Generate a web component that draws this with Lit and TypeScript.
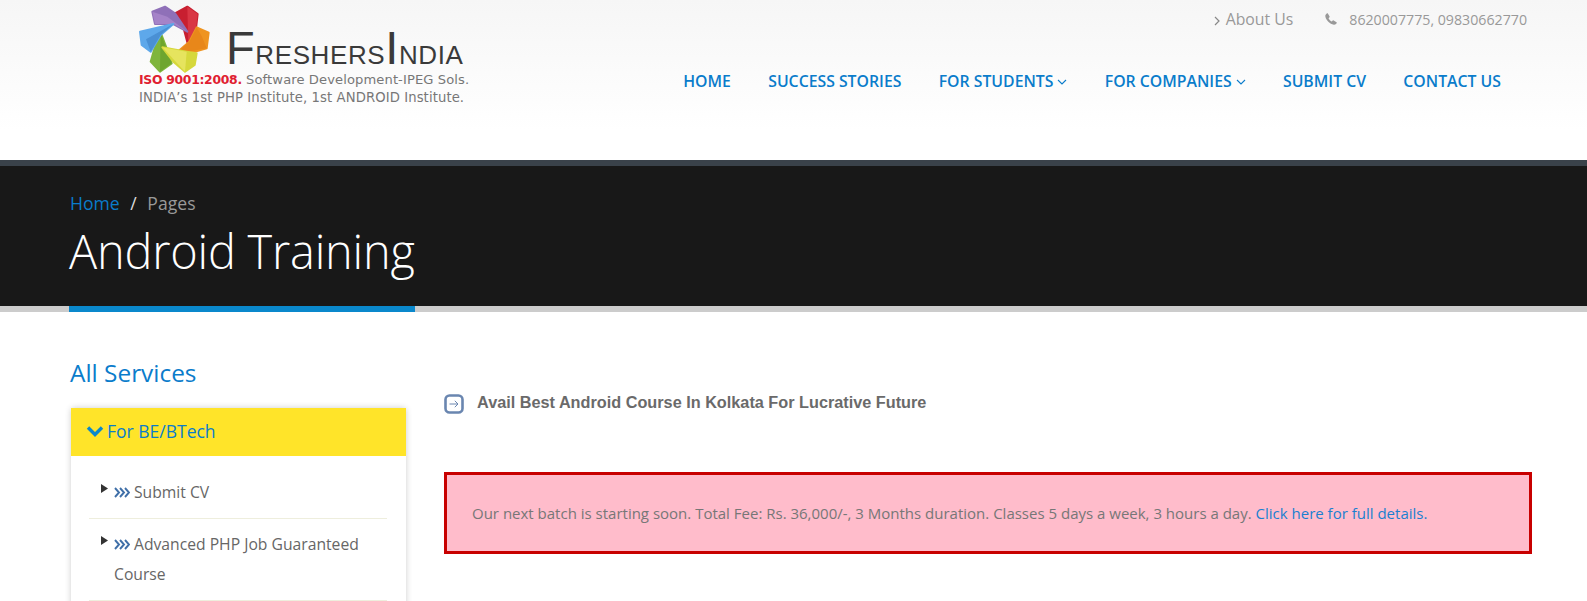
import { LitElement, html, css, svg } from "lit";
import { customElement } from "lit/decorators.js";

const chevron = html`<svg class="caret" viewBox="0 0 10 6"><path d="M1 1l4 4 4-4" fill="none" stroke="currentColor" stroke-width="1.100"/></svg>`;
const triple = html`<svg class="triple" viewBox="0 0 16 11"><path d="M1 1l4 4.500-4 4.500M6 1l4 4.500-4 4.500M11 1l4 4.500-4 4.500" fill="none" stroke="#3f6fa8" stroke-width="1.900"/></svg>`;
const marker = html`<svg class="marker" viewBox="0 0 7 9"><path d="M0 0l7 4.500L0 9z" fill="#333"/></svg>`;

const petals = svg`
  <polygon points="135,40 172,20 203,42 198,85 175,138 160,82" fill="#c81f30" stroke="#c81f30" stroke-width="6" stroke-linejoin="round"/>
  <polygon points="172,20 203,42 198,85 175,138" fill="#d93644"/>
  <polygon points="200,82 236,98 230,145 178,160 135,162 178,125" fill="#ef9420" stroke="#ef9420" stroke-width="6" stroke-linejoin="round"/>
  <polygon points="200,82 178,125 135,162 230,145 216,110" fill="#e8871a"/>
  <polygon points="92,98 112,150 125,190 90,215 62,185 72,150" fill="#7fb53c" stroke="#7fb53c" stroke-width="6" stroke-linejoin="round"/>
  <polygon points="92,98 125,190 90,215" fill="#6ea52f"/>
  <polygon points="97,142 170,155 200,160 194,195 165,215 130,185" fill="#d6d83c" stroke="#d6d83c" stroke-width="6" stroke-linejoin="round"/>
  <polygon points="97,142 170,155 165,215" fill="#e6e45e"/>
  <polygon points="67,35 105,20 135,40 172,95 130,72 75,72" fill="#8f70b8" stroke="#8f70b8" stroke-width="6" stroke-linejoin="round"/>
  <polygon points="67,35 75,72 130,72 172,95 112,50" fill="#a583c8"/>
  <polygon points="30,95 130,72 92,105 62,155 35,135" fill="#5ea8ea" stroke="#5ea8ea" stroke-width="6" stroke-linejoin="round"/>
  <polygon points="130,72 92,105 62,155 48,118" fill="#4a90d4"/>
`;

@customElement("app-root")
export class AppRoot extends LitElement {
  static styles = css`
    :host { display: block; height: 601px; overflow: hidden; background: #fff; font-family: "Open Sans", sans-serif; color: #777; }
    a { color: #0a7ccb; text-decoration: none; }

    .header { height: 160px; box-sizing: border-box; background: linear-gradient(#f6f6f6, #fff 130px); display: flex; justify-content: space-between; padding: 0 60px 0 130px; }
    .logo { width: 345px; }
    .logo-top { display: flex; align-items: flex-end; height: 70px; }
    .mark { width: 100px; height: 75px; margin-bottom: -5px; flex: none; }
    .brand { font-family: "Liberation Sans", sans-serif; color: #3a3a3a; font-size: 37px; line-height: 46px; font-variant: small-caps; margin-left: -4px; margin-bottom: -5px; white-space: nowrap; letter-spacing: 0.6px; }
    .brand b { font-weight: 400; font-size: 47px; }
    .tag { font-family: "DejaVu Sans", sans-serif; font-size: 13.100px; line-height: 18px; color: #777; white-space: nowrap; margin: 1px 0 0 9px; letter-spacing: 0.1px; }
    .tag .l2 { letter-spacing: 0.1px; font-size: 13.200px; }
    .tag b { color: #e02030; font-size: 12.400px; letter-spacing: -0.3px; }
    .right { display: flex; flex-direction: column; align-items: flex-end; }
    .top { display: flex; align-items: center; gap: 31px; height: 38px; color: #999; }
    .about { font-size: 15.800px; display: flex; align-items: center; gap: 6px; margin-top: -1px; }
    .about svg { width: 6px; height: 10px; margin-top: 5px; }
    .phone { font-size: 14.200px; display: flex; align-items: center; gap: 11px; }
    .phone svg { width: 14px; height: 14px; }
    .nav { display: flex; gap: 37.300px; margin-top: 25px; padding-right: 26px; font-size: 15.800px; font-weight: 600; white-space: nowrap; }
    .nav a { display: flex; align-items: center; gap: 4px; color: #0a7ccb; line-height: 36px; }
    .caret { width: 10px; height: 6px; margin-top: 2px; }

    .banner { height: 152px; box-sizing: border-box; background: #181818; border-top: 6px solid #3a424a; border-bottom: 6px solid #ccc; padding: 0 69px; }
    .crumb { font-size: 17.600px; line-height: 24px; padding: 25px 0 0 1px; color: #999; white-space: nowrap; }
    .crumb i { font-style: normal; color: #ddd; margin: 0 6px; }
    .title-wrap { display: inline-block; border-bottom: 6px solid #0a88cc; height: 91px; }
    .title { margin: 0; font-weight: 300; font-size: 46.900px; line-height: 72px; color: #fff; white-space: nowrap; letter-spacing: -0.2px; }

    .content { display: grid; grid-template-columns: 337px 1088px; column-gap: 38px; padding: 43px 0 0 69px; }
    .all { margin: 0 0 17px; padding-left: 1px; font-weight: 400; font-size: 24.400px; line-height: 36px; color: #0a7ccb; }
    .card { margin-left: 2px; background: #fff; box-shadow: 0 0 6px rgba(0,0,0,.2); border-radius: 2px; }
    .card-head { box-sizing: border-box; height: 48px; padding: 0 0 2px 15px; background: #ffe429; color: #0a7ccb; font-size: 17.500px; display: flex; align-items: center; gap: 3px; line-height: 46px; }
    .card-head svg { width: 18px; height: 12px; }
    ul { list-style: none; margin: 0; padding: 11px 19px 0 18px; min-height: 240px; }
    li { border-bottom: 1px solid #eeeedd; padding: 10px 18px 11px 25px; font-size: 15.700px; line-height: 30px; color: #666; position: relative; }
    .marker { position: absolute; left: 12px; top: 17px; width: 7px; height: 9px; }
    .triple { width: 16px; height: 11px; margin-right: 4px; }

    .main { padding-top: 35px; }
    .sub { display: flex; align-items: center; gap: 13px; font: 700 16.250px/24px "Liberation Sans", sans-serif; color: #6a6a6a; margin-bottom: 58px; }
    .sub svg { width: 20px; height: 20px; margin-top: 3px; flex: none; }
    .notice { box-sizing: border-box; height: 82px; border: 3px solid #c80000; background: #ffbccb; padding: 0 25px; display: flex; align-items: center; font-size: 15px; color: #777; white-space: nowrap; }
    .notice a { color: #1a80d0; }
  `;

  render() {
    return html`
      <div class="header">
        <div class="logo">
          <div class="logo-top">
            <svg class="mark" viewBox="0 0 300 225">${petals}</svg>
            <div class="brand"><b>F</b>reshers<b>I</b>ndia</div>
          </div>
          <div class="tag"><b>ISO 9001:2008.</b> Software Development-IPEG Sols.<br /><span class="l2">INDIA’s 1st PHP Institute, 1st ANDROID Institute.</span></div>
        </div>
        <div class="right">
          <div class="top">
            <span class="about"><svg viewBox="0 0 6 10"><path d="M1 1l4 4-4 4" fill="none" stroke="#888" stroke-width="1.200"/></svg>About Us</span>
            <span class="phone"><svg viewBox="0 0 24 24"><path fill="#999" d="M6.600 2.500l3 5c.3.500.2 1-.2 1.400L7.800 10.600c1 2.400 3.200 4.700 5.600 5.700l1.600-1.600c.4-.4 1-.5 1.500-.2l5 3c.5.300.6.900.3 1.400-1 2-2.800 3.300-5 2.900C10 20.500 3.500 14 2.300 7.700 1.900 5.500 3.200 3.600 5.200 2.300c.5-.3 1.100-.3 1.400.2z"/></svg>8620007775, 09830662770</span>
          </div>
          <nav class="nav">
            <a href="#">HOME</a>
            <a href="#">SUCCESS STORIES</a>
            <a href="#">FOR STUDENTS ${chevron}</a>
            <a href="#">FOR COMPANIES ${chevron}</a>
            <a href="#">SUBMIT CV</a>
            <a href="#">CONTACT US</a>
          </nav>
        </div>
      </div>

      <div class="banner">
        <div class="crumb"><a href="#">Home</a> <i>/</i> Pages</div>
        <div class="title-wrap"><h1 class="title">Android Training</h1></div>
      </div>

      <div class="content">
        <aside>
          <h2 class="all">All Services</h2>
          <div class="card">
            <div class="card-head">
              <svg viewBox="0 0 18 12"><path d="M2 2.500l7 7 7-7" fill="none" stroke="#0a88cc" stroke-width="3.400"/></svg>
              For BE/BTech
            </div>
            <ul>
              <li>${marker}${triple}Submit CV</li>
              <li>${marker}${triple}Advanced PHP Job Guaranteed Course</li>
            </ul>
          </div>
        </aside>
        <section class="main">
          <div class="sub">
            <svg viewBox="0 0 20 20"><rect x="1.500" y="1.500" width="17" height="17" rx="4" fill="#fff" stroke="#6a86b0" stroke-width="2.600"/><path d="M5.500 10h8.500M10.800 6.800L14 10l-3.200 3.200" fill="none" stroke="#6a86b0" stroke-width="1"/></svg>
            Avail Best Android Course In Kolkata For Lucrative Future
          </div>
          <div class="notice">
            <span>Our next batch is starting soon. Total Fee: Rs. 36,000/-, 3 Months duration. Classes 5 days a week, 3 hours a day. <a href="#">Click here for full details.</a></span>
          </div>
        </section>
      </div>
    `;
  }
}
